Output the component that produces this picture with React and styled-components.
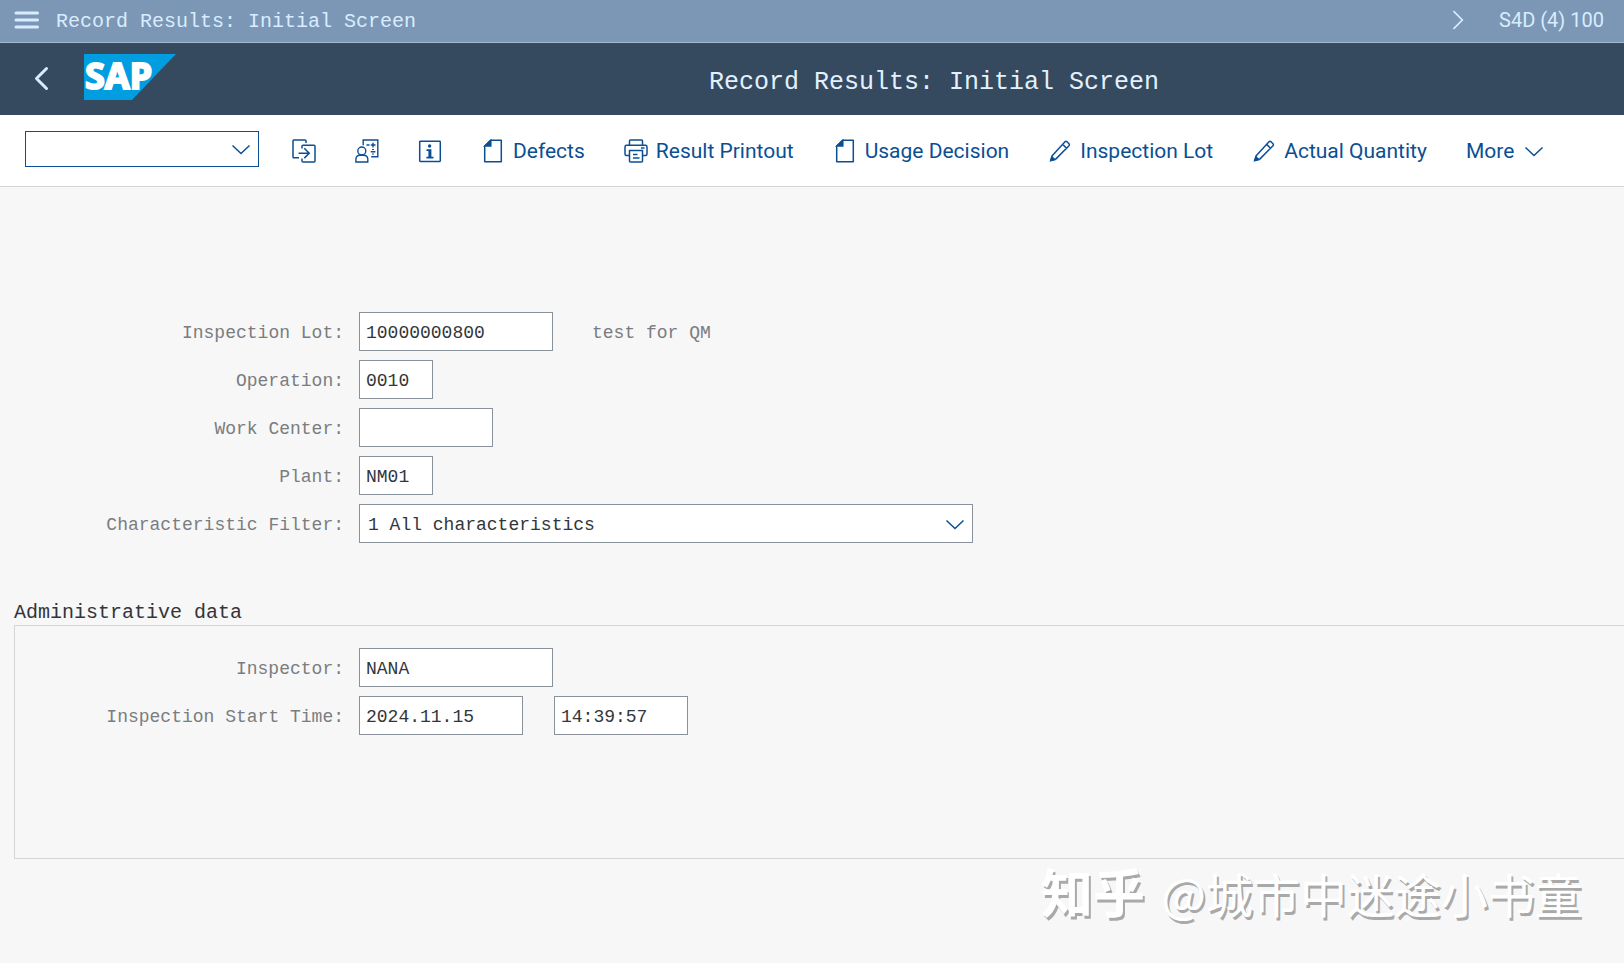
import React from "react";
import styled, { createGlobalStyle } from "styled-components";

const mono = `"Liberation Mono", "Noto Sans CJK SC", monospace`;
const sans = `Roboto, "Noto Sans CJK SC", sans-serif`;
const blue = "#0a4f94";

const GlobalStyle = createGlobalStyle`
  *, *::before, *::after { box-sizing: border-box; }
  body { margin: 0; background: #f7f7f7; }
`;

const Page = styled.div`
  position: relative;
  display: flex;
  flex-direction: column;
  min-height: 100vh;
  overflow-x: hidden;
  background: #f7f7f7;
  font-family: ${mono};
`;

const SystemBar = styled.header`
  display: flex;
  align-items: center;
  height: 43px;
  padding: 0 20px 2px 14px;
  background: #7b97b5;
  border-bottom: 1px solid #a3bad0;
  color: #d9ecff;
`;

const SystemTitle = styled.span`
  flex: 1;
  margin-left: 16px;
  padding-top: 4px;
  font-size: 20px;
  line-height: 24px;
`;

const SystemId = styled.span`
  margin-left: 35px;
  font-family: ${sans};
  font-size: 20px;
  line-height: 24px;
`;

const PlainButton = styled.button`
  display: flex;
  align-items: center;
  padding: 0;
  border: 0;
  background: none;
  color: inherit;
  font: inherit;
  cursor: pointer;
`;

const TitleBar = styled.div`
  display: flex;
  align-items: center;
  height: 72px;
  padding: 0 0 0 32px;
  background: #354a5f;
  color: #e3f1ff;
`;

const Logo = styled.svg`
  margin: 0 0 4px 32px;
  overflow: visible;
`;

const Heading = styled.h1`
  flex: 1;
  margin: 0;
  padding: 8px 0 0 68px;
  text-align: center;
  font-size: 25px;
  font-weight: 400;
  line-height: 32px;
`;

const Toolbar = styled.div`
  display: flex;
  align-items: flex-start;
  gap: 33px;
  height: 72px;
  padding: 16px 25px 0;
  background: #fff;
  border-bottom: 1px solid #d5d5d5;
`;

const ToolGroup = styled.div`
  display: flex;
  align-items: center;
  gap: 39px;
  height: 40px;
  color: ${blue};
  font-family: ${sans};
  font-size: 21px;
  line-height: 24px;
  white-space: nowrap;
`;

const ToolButton = styled(PlainButton)`
  gap: 8px;
`;

const SelectWrap = styled.span`
  position: relative;
  display: block;
  flex: none;
  width: ${(p) => p.$width}px;
`;

const SelectBox = styled.select`
  display: block;
  appearance: none;
  width: 100%;
  height: ${(p) => p.$height}px;
  padding: 2px 32px 0 8px;
  border: 1px solid ${(p) => p.$line};
  border-radius: 0;
  background: #fff;
  color: #32363a;
  font-family: ${mono};
  font-size: 18px;
`;

const SelectArrow = styled.span`
  position: absolute;
  top: 0;
  right: 6px;
  display: flex;
  align-items: center;
  height: 100%;
  color: ${blue};
  pointer-events: none;
`;

const Content = styled.main`
  flex: 1;
  padding: 125px 0 48px 14px;
`;

const Rows = styled.div`
  display: flex;
  flex-direction: column;
  gap: 9px;
`;

const Row = styled.div`
  display: flex;
  align-items: center;
  font-size: 18px;
  line-height: 24px;
`;

const Label = styled.label`
  width: 330px;
  margin-right: 15px;
  padding-top: 2px;
  text-align: right;
  color: #7a7d80;
`;

const Field = styled.input`
  width: ${(p) => p.$width}px;
  height: 39px;
  margin-right: 31px;
  padding: 2px 6px 0;
  border: 1px solid #89919a;
  border-radius: 0;
  background: #fff;
  color: #32363a;
  font-family: ${mono};
  font-size: 18px;
`;

const Note = styled.span`
  margin-left: 8px;
  padding-top: 2px;
  color: #7a7d80;
`;

const GroupTitle = styled.h2`
  margin: 56px 0 0;
  padding-top: 2px;
  color: #32363a;
  font-size: 20px;
  font-weight: 400;
  line-height: 24px;
`;

const GroupBox = styled.section`
  height: 234px;
  padding-top: 22px;
  border: 1px solid #d5d5d5;
  border-right: 0;

  ${Label} {
    width: 329px;
  }
`;

const Watermark = styled.div`
  position: absolute;
  right: 42px;
  bottom: 35px;
  color: #fff;
  font-family: "Noto Sans CJK SC", sans-serif;
  font-size: 47px;
  line-height: 70px;
  text-shadow: 2px 3px 0 #a9a9a9;
  white-space: nowrap;
`;

const Brand = styled.strong`
  margin-right: 6px;
  font-size: 52px;
  font-weight: 700;
`;

const Icon = ({ children, size = 24, width = 1.5 }) => (
  <svg width={size} height={size} viewBox="0 0 24 24" fill="none" stroke="currentColor" strokeWidth={width} aria-hidden="true">
    {children}
  </svg>
);

const ChevronDown = () => (
  <Icon><path d="M3.5 8.5 12 16.5 20.5 8.5" /></Icon>
);
const DocIcon = () => (
  <Icon>
    <path d="M9.5 1.2H20.3V22.8H3.7V7Z" strokeLinejoin="round" />
    <path d="M9.8 1.5V7H4Z" fill="currentColor" />
  </Icon>
);
const PencilIcon = () => (
  <Icon>
    <path d="M3 21.3 4.4 16.4 17 2.8Q18 1.9 19 2.8L21 4.7Q21.8 5.6 21 6.7L8 19.9Z M14.7 5.4 18.5 9.2" strokeLinejoin="round" />
    <path d="M2.6 21.7 3.8 17.8 6.8 20.6Z" fill="currentColor" />
  </Icon>
);
const PrinterIcon = () => (
  <Icon>
    <path d="M5.5 6V2Q5.5 1 6.5 1H17.5Q18.5 1 18.5 2V6 M5 16.5H2.5Q1 16.5 1 15V8Q1 6.3 2.5 6.3H21.5Q23 6.3 23 8V15Q23 16.5 21.5 16.5H19 M5.5 11.5H18.5V22Q18.5 23 17.5 23H6.5Q5.5 23 5.5 22Z M9 15.5H13.5 M9 19H15.5 M17 9H20.5" />
  </Icon>
);
const SwitchIcon = () => (
  <Icon>
    <path d="M7 18.8H1.8Q1 18.8 1 18V1.8Q1 1 1.8 1H13Q14 1 14 2V4 M10 9.5V7.2Q10 6.3 11 6.3H22Q23 6.3 23 7.2V22Q23 23 22 23H11Q10 23 10 22V19.5 M6.5 14.2H17 M12.3 9.3 17.2 14.2 12.3 19.1" />
  </Icon>
);
const UserGridIcon = () => (
  <Icon width={1.4}>
    <path d="M8.2 6.2V1H22.8V17.8H16.2" />
    <circle cx="6.8" cy="12" r="4" />
    <path d="M.9 23V20.3Q1 16.3 5 16.3H8.5Q12.6 16.3 12.8 20.3V23Z" />
    <path d="M11.5 6H14.5 M15.8 6H20.5 M18 3.7V8.4 M15.8 12.8H20.4" />
    <path d="M18 10V10.9 M18 14.6V15.5" strokeWidth="2" />
  </Icon>
);
const InfoIcon = () => (
  <Icon width={1.5}>
    <rect x="1.7" y="2.2" width="20.6" height="20.2" rx=".7" />
    <circle cx="11.6" cy="7" r="1.7" fill="currentColor" stroke="none" />
    <path d="M8.5 10.3H13.4V17.8H15.5V19.6H8.4V17.8H10.4V12H8.5Z" fill="currentColor" stroke="none" />
  </Icon>
);

const tools = [
  { text: "Defects", icon: <DocIcon /> },
  { text: "Result Printout", icon: <PrinterIcon /> },
  { text: "Usage Decision", icon: <DocIcon /> },
  { text: "Inspection Lot", icon: <PencilIcon /> },
  { text: "Actual Quantity", icon: <PencilIcon /> },
];

const FormRow = ({ id, label, value, width, children }) => (
  <Row>
    <Label htmlFor={id}>{label}</Label>
    <Field id={id} defaultValue={value} $width={width} />
    {children}
  </Row>
);

export default function App() {
  return (
    <Page>
      <GlobalStyle />
      <SystemBar>
        <PlainButton type="button" aria-label="Menu">
          <svg width="26" height="20" viewBox="0 0 26 20" stroke="currentColor" strokeWidth="3" strokeLinecap="round">
            <path d="M2 3H23.5M2 10H23.5M2 17H23.5" />
          </svg>
        </PlainButton>
        <SystemTitle>Record Results: Initial Screen</SystemTitle>
        <PlainButton type="button" aria-label="Expand">
          <svg width="12" height="20" viewBox="0 0 12 20" fill="none" stroke="currentColor" strokeWidth="1.7">
            <path d="M1.5 1.2 10.3 10 1.5 18.8" />
          </svg>
        </PlainButton>
        <SystemId>S4D (4) 100</SystemId>
      </SystemBar>
      <TitleBar>
        <PlainButton type="button" aria-label="Back">
          <svg width="20" height="26" viewBox="0 0 20 26" fill="none" stroke="#d9ecff" strokeWidth="3" strokeLinecap="round" strokeLinejoin="round">
            <path d="M14.5 2.5 4.5 12.5 14.5 22.5" />
          </svg>
        </PlainButton>
        <Logo width="92" height="46" viewBox="0 0 92 46" role="img" aria-label="SAP">
          <path d="M0 0H92L48 46H0Z" fill="#009de0" />
          <text x="1" y="35" fill="#fff" stroke="#fff" strokeWidth="2" fontFamily="Noto Sans, sans-serif" fontWeight="700" fontSize="36">SAP</text>
        </Logo>
        <Heading>Record Results: Initial Screen</Heading>
      </TitleBar>
      <Toolbar>
        <SelectWrap $width={234}>
          <SelectBox $height={36} $line={blue} aria-label="Command" defaultValue="">
            <option value=""></option>
          </SelectBox>
          <SelectArrow><ChevronDown /></SelectArrow>
        </SelectWrap>
        <ToolGroup>
          <ToolButton type="button" aria-label="Switch session"><SwitchIcon /></ToolButton>
          <ToolButton type="button" aria-label="User settings"><UserGridIcon /></ToolButton>
          <ToolButton type="button" aria-label="Information"><InfoIcon /></ToolButton>
          {tools.map((t) => (
            <ToolButton type="button" key={t.text}>{t.icon}{t.text}</ToolButton>
          ))}
          <ToolButton type="button">More<ChevronDown /></ToolButton>
        </ToolGroup>
      </Toolbar>
      <Content>
        <Rows>
          <FormRow id="lot" label="Inspection Lot:" value="10000000800" width={194}>
            <Note>test for QM</Note>
          </FormRow>
          <FormRow id="operation" label="Operation:" value="0010" width={74} />
          <FormRow id="workcenter" label="Work Center:" value="" width={134} />
          <FormRow id="plant" label="Plant:" value="NM01" width={74} />
          <Row>
            <Label htmlFor="filter">Characteristic Filter:</Label>
            <SelectWrap $width={614}>
              <SelectBox id="filter" $height={39} $line="#89919a" defaultValue="1">
                <option value="1">1 All characteristics</option>
              </SelectBox>
              <SelectArrow><ChevronDown /></SelectArrow>
            </SelectWrap>
          </Row>
        </Rows>
        <GroupTitle>Administrative data</GroupTitle>
        <GroupBox>
          <Rows>
            <FormRow id="inspector" label="Inspector:" value="NANA" width={194} />
            <FormRow id="date" label="Inspection Start Time:" value="2024.11.15" width={164}>
              <Field aria-label="Start time" defaultValue="14:39:57" $width={134} />
            </FormRow>
          </Rows>
        </GroupBox>
      </Content>
      <Watermark><Brand>知乎</Brand> @城市中迷途小书童</Watermark>
    </Page>
  );
}
